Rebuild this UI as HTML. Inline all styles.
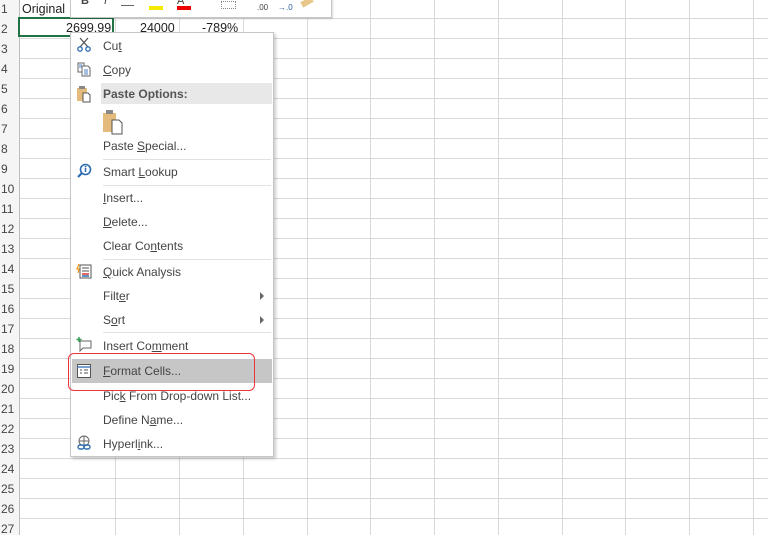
<!DOCTYPE html>
<html><head><style>
body{margin:0;width:768px;height:535px;overflow:hidden;background:#fff;font-family:"Liberation Sans",sans-serif;position:relative}
.hl{position:absolute;left:0;top:0;width:768px;height:535px;background:repeating-linear-gradient(to bottom,transparent 0 18px,#d9d9d9 18px 19px,transparent 19px 20px)}
.vl{position:absolute;top:0;height:535px;width:1px;background:#d9d9d9}
.rh{position:absolute;left:0;top:0;width:19px;height:535px;background:#f5f5f5;border-right:1px solid #bdbdbd}
.rn{position:absolute;left:1px;width:18px;font-size:12px;color:#444;text-align:left}
.cell{position:absolute;font-size:12.5px;color:#222}
.menu{position:absolute;left:70px;top:32px;width:202px;height:423px;background:#fff;border:1px solid #c6c6c6;box-shadow:2px 2px 3px rgba(0,0,0,.2)}
.it{position:absolute;left:32px;font-size:12px;color:#444;white-space:nowrap}
.sep{position:absolute;left:32px;right:2px;height:1px;background:#e1e1e1}
.ic{position:absolute;left:5px}
.arr{position:absolute;right:9px;width:0;height:0;border-top:4px solid transparent;border-bottom:4px solid transparent;border-left:4px solid #666}
u{text-decoration:underline}
</style></head><body>
<div class="hl"></div>
<div class="vl" style="left:115px"></div><div class="vl" style="left:179px"></div><div class="vl" style="left:243px"></div><div class="vl" style="left:307px"></div><div class="vl" style="left:370px"></div><div class="vl" style="left:434px"></div><div class="vl" style="left:498px"></div><div class="vl" style="left:562px"></div><div class="vl" style="left:625px"></div><div class="vl" style="left:689px"></div><div class="vl" style="left:753px"></div>
<div class="rh">
<div class="rn" style="top:2px">1</div><div class="rn" style="top:22px">2</div><div class="rn" style="top:42px">3</div><div class="rn" style="top:62px">4</div><div class="rn" style="top:82px">5</div><div class="rn" style="top:102px">6</div><div class="rn" style="top:122px">7</div><div class="rn" style="top:142px">8</div><div class="rn" style="top:162px">9</div><div class="rn" style="top:182px">10</div><div class="rn" style="top:202px">11</div><div class="rn" style="top:222px">12</div><div class="rn" style="top:242px">13</div><div class="rn" style="top:262px">14</div><div class="rn" style="top:282px">15</div><div class="rn" style="top:302px">16</div><div class="rn" style="top:322px">17</div><div class="rn" style="top:342px">18</div><div class="rn" style="top:362px">19</div><div class="rn" style="top:382px">20</div><div class="rn" style="top:402px">21</div><div class="rn" style="top:422px">22</div><div class="rn" style="top:442px">23</div><div class="rn" style="top:462px">24</div><div class="rn" style="top:482px">25</div><div class="rn" style="top:502px">26</div><div class="rn" style="top:522px">27</div>
</div>
<div class="cell" style="left:22px;top:2px">Original</div>
<div style="position:absolute;left:18px;top:17px;width:96px;height:20px;border:2px solid #217346;box-sizing:border-box"></div>
<div class="cell" style="left:66px;top:21px">2699.99</div>
<div class="cell" style="left:140px;top:21px">24000</div>
<div class="cell" style="left:202px;top:21px">-789%</div>
<!-- mini toolbar -->
<div style="position:absolute;left:70px;top:-2px;width:260px;height:18px;background:#fff;border:1px solid #c6c6c6;box-shadow:1px 1px 2px rgba(0,0,0,.15)">
<div style="position:absolute;left:10px;top:-4px;font-size:11px;font-weight:bold;color:#444">B</div>
<div style="position:absolute;left:33px;top:-4px;font-size:11px;font-style:italic;color:#444">I</div>
<div style="position:absolute;left:50px;top:6px;width:13px;height:1px;background:#666"></div>
<div style="position:absolute;left:78px;top:7px;width:14px;height:4px;background:#f5e900"></div>
<div style="position:absolute;left:106px;top:-4px;font-size:11px;color:#444">A</div>
<div style="position:absolute;left:106px;top:7px;width:14px;height:4px;background:#e00"></div>
<div style="position:absolute;left:150px;top:2px;width:13px;height:6px;border:1px dotted #888"></div>
<div style="position:absolute;left:186px;top:4px;font-size:8px;color:#444">.00</div>
<div style="position:absolute;left:207px;top:4px;font-size:8px;color:#2b5fa8">→.0</div>
<div style="position:absolute;left:230px;top:0;width:12px;height:6px;background:#e8c88a;transform:rotate(-30deg)"></div>
</div>
<!-- menu -->
<div class="menu">
<svg class="ic" style="top:4px" width="16" height="16" viewBox="0 0 16 16"><path d="M4 1l8 9M12 1l-8 9" stroke="#555" stroke-width="1.3" fill="none"/><circle cx="4" cy="12" r="2.2" stroke="#2b6cb0" fill="none" stroke-width="1.3"/><circle cx="12" cy="12" r="2.2" stroke="#2b6cb0" fill="none" stroke-width="1.3"/></svg>
<div class="it" style="top:6px">Cu<u>t</u></div>
<svg class="ic" style="top:28px" width="16" height="16" viewBox="0 0 16 16"><path d="M2 2h6v9H2z" fill="#fff" stroke="#666"/><path d="M6 5h6l2 2v8H6z" fill="#fff" stroke="#666"/><path d="M8 9h4M8 11h4M8 13h4M3 4h3M3 6h3" stroke="#4a7fc1"/></svg>
<div class="it" style="top:30px"><u>C</u>opy</div>
<div style="position:absolute;left:30px;top:50px;width:171px;height:21px;background:#e8e8e8"></div>
<svg class="ic" style="top:52px" width="16" height="18" viewBox="0 0 16 18"><rect x="1" y="3" width="10" height="13" fill="#e4bb7c"/><rect x="3" y="1" width="6" height="3" fill="#888"/><path d="M7 8h5l2 2v7H7z" fill="#fff" stroke="#555"/></svg>
<div class="it" style="top:54px;font-weight:bold;color:#555">Paste Options:</div>
<svg style="position:absolute;left:31px;top:76px" width="22" height="26" viewBox="0 0 22 26"><rect x="1" y="4" width="13" height="19" fill="#e4bb7c"/><rect x="4" y="1" width="7" height="4" fill="#888"/><path d="M10 11h7l3 3v11H10z" fill="#fff" stroke="#555"/></svg>
<div class="it" style="top:106px">Paste <u>S</u>pecial...</div>
<div class="sep" style="top:126px"></div>
<svg class="ic" style="top:130px" width="16" height="16" viewBox="0 0 16 16"><circle cx="9.5" cy="6.5" r="5" fill="none" stroke="#2b6cb0" stroke-width="1.6"/><path d="M6 10l-4 4" stroke="#2b6cb0" stroke-width="2.2"/><path d="M9.5 5v4" stroke="#2b6cb0" stroke-width="1.5"/><circle cx="9.5" cy="3.6" r=".9" fill="#2b6cb0"/></svg>
<div class="it" style="top:132px">Smart <u>L</u>ookup</div>
<div class="sep" style="top:152px"></div>
<div class="it" style="top:158px"><u>I</u>nsert...</div>
<div class="it" style="top:182px"><u>D</u>elete...</div>
<div class="it" style="top:206px">Clear Co<u>n</u>tents</div>
<div class="sep" style="top:226px"></div>
<svg class="ic" style="top:230px" width="16" height="16" viewBox="0 0 16 16"><rect x="4" y="2" width="11" height="13" fill="#fff" stroke="#555"/><path d="M6 5h7M6 8h7" stroke="#555"/><path d="M6 11h7" stroke="#d33" stroke-width="1.5"/><path d="M6 13h7" stroke="#2b6cb0" stroke-width="1.5"/><path d="M3 1L1 6h2l-1 4" stroke="#f0a020" stroke-width="1.3" fill="none"/></svg>
<div class="it" style="top:232px"><u>Q</u>uick Analysis</div>
<div class="it" style="top:256px">Filt<u>e</u>r</div><div class="arr" style="top:259px"></div>
<div class="it" style="top:280px">S<u>o</u>rt</div><div class="arr" style="top:283px"></div>
<div class="sep" style="top:299px"></div>
<svg class="ic" style="top:303px" width="16" height="16" viewBox="0 0 16 16"><path d="M4 5h11v7H7l-3 3v-3H4z" fill="#fff" stroke="#666"/><path d="M3 1v5M0.5 3.5h5" stroke="#2e9b4e" stroke-width="1.4"/></svg>
<div class="it" style="top:306px">Insert Co<u>m</u>ment</div>
<div style="position:absolute;left:1px;top:326px;width:200px;height:24px;background:#c6c6c6"></div>
<svg class="ic" style="top:330px" width="16" height="16" viewBox="0 0 16 16"><rect x="1.5" y="1.5" width="13" height="13" fill="#fff" stroke="#555"/><path d="M1.5 4h13" stroke="#4a7fc1" stroke-width="1.5"/><path d="M4 7h2M8 7h4M4 10h2M8 10h4" stroke="#555"/></svg>
<div class="it" style="top:331px"><u>F</u>ormat Cells...</div>
<div class="it" style="top:356px">Pic<u>k</u> From Drop-down List...</div>
<div class="it" style="top:380px">Define N<u>a</u>me...</div>
<svg class="ic" style="top:402px" width="16" height="16" viewBox="0 0 16 16"><circle cx="8" cy="6" r="5" fill="none" stroke="#666"/><path d="M3 6h10M8 1v10" stroke="#666"/><rect x="2" y="10" width="6" height="4" rx="2" fill="#fff" stroke="#2b6cb0" stroke-width="1.4"/><rect x="8" y="10" width="6" height="4" rx="2" fill="none" stroke="#2b6cb0" stroke-width="1.4"/></svg>
<div class="it" style="top:404px">Hyperl<u>i</u>nk...</div>
</div>
<div style="position:absolute;left:68px;top:353px;width:187px;height:38px;border:1.5px solid #e8343a;border-radius:6px;box-sizing:border-box"></div>
</body></html>
